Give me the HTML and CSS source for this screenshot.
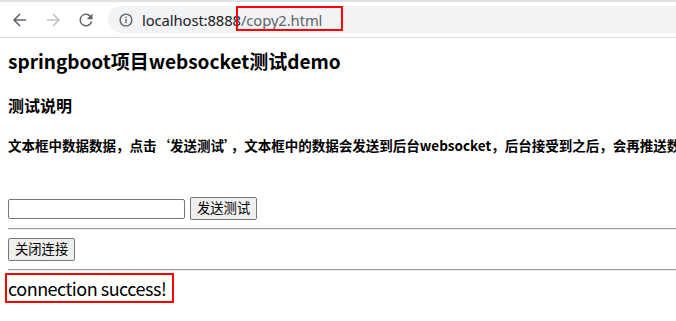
FILE: index.html
```html
<!DOCTYPE html>
<html lang="zh">
<head>
  <meta charset="UTF-8">
  <title>websocket测试demo</title>
  <link rel="stylesheet" href="styles.css">
</head>
<body>
  <div class="toolbar">
    <svg class="nav-icon" width="16" height="16" viewBox="0 0 16 16"><path d="M14 7.2H3.9l4.6-4.6L7.4 1.5 1 8l6.4 6.5 1.1-1.1-4.6-4.6H14z" fill="#5f6368"/></svg>
    <svg class="nav-icon" width="16" height="16" viewBox="0 0 16 16"><path d="M2 7.2h10.1L7.5 2.6l1.1-1.1L15 8l-6.4 6.5-1.1-1.1 4.6-4.6H2z" fill="#bdc1c6"/></svg>
    <svg class="nav-icon" width="16" height="16" viewBox="0 0 16 16"><path d="M12.6 3.4A6.3 6.3 0 0 0 8 1.5a6.5 6.5 0 1 0 6.3 8h-1.7A4.9 4.9 0 1 1 8 3.1c1.3 0 2.5.6 3.4 1.5L8.8 7.2h5.7V1.5z" fill="#5f6368"/></svg>
    <div class="omnibox">
      <svg width="14" height="14" viewBox="0 0 14 14"><circle cx="7" cy="7" r="5.9" fill="none" stroke="#5f6368" stroke-width="1.4"/><rect x="6.3" y="6" width="1.4" height="4.2" fill="#5f6368"/><rect x="6.3" y="3.6" width="1.4" height="1.4" fill="#5f6368"/></svg>
      <span class="url">localhost:8888<span class="path">/copy2.html</span></span>
      <div class="mark"></div>
    </div>
  </div>

  <div class="page">
    <h1>springboot项目websocket测试demo</h1>
    <h3>测试说明</h3>
    <h5>文本框中数据数据，点击‘发送测试’，文本框中的数据会发送到后台websocket，后台接受到之后，会再推送数据到前端，展示在下方；点击关闭连接，可以关闭该websocket；可以跟踪代码，了解具体的流程；代码上有详细注解</h5>
    <div class="row send-row">
      <input type="text" id="text">
      <button>发送测试</button>
    </div>
    <hr>
    <div class="row">
      <button>关闭连接</button>
    </div>
    <hr class="last">
    <div id="message"><span class="result">connection success!</span></div>
  </div>
</body>
</html>
```

FILE: styles.css
```css
html, body {
  margin: 0;
  padding: 0;
  overflow: hidden;
  background-color: #fff;
}
body {
  font-family: "Noto Sans CJK SC", sans-serif;
  color: #000;
}
.toolbar {
  height: 35px;
  border-top: 2px solid #dee1e6;
  border-bottom: 1px solid #dadce0;
  display: flex;
  align-items: center;
  padding-left: 12px;
}
.nav-icon {
  margin-right: 17px;
  flex: none;
}
.nav-icon:nth-child(3) {
  margin-right: 14px;
}
.omnibox {
  position: relative;
  flex: 1;
  height: 27px;
  background-color: #f1f3f4;
  border-radius: 14px 0 0 14px;
  display: flex;
  align-items: center;
  padding-left: 11px;
  margin-right: -20px;
}
.omnibox svg {
  flex: none;
  margin-right: 9px;
}
.url {
  font-family: "Noto Sans", sans-serif;
  font-size: 14.8px;
  color: #202124;
  letter-spacing: -0.1px;
}
.path {
  color: #5f6368;
}
.mark {
  position: absolute;
  left: 128px;
  top: 0;
  width: 103px;
  height: 21px;
  border: 2px solid #f00;
}
.page {
  width: 1200px;
  padding: 0 8px;
}
h1 {
  font-size: 19px;
  line-height: 22px;
  margin: 12px 0 0;
  font-weight: bold;
}
h3 {
  font-size: 16px;
  line-height: 20px;
  margin: 23px 0 0;
}
h5 {
  font-size: 13.5px;
  line-height: 18px;
  margin: 21px 0 0;
  white-space: nowrap;
}
.row {
  display: flex;
  align-items: center;
  gap: 5px;
}
.send-row {
  margin-top: 43px;
}
input {
  width: 173px;
  height: 16px;
  padding: 1px;
  border: 1px solid #767676;
  border-radius: 2px;
  margin: 0;
}
button {
  font-family: "Noto Sans CJK SC", sans-serif;
  font-size: 13.3px;
  line-height: 17px;
  padding: 1px 6px 3px;
  border: 1px solid #767676;
  border-radius: 2px;
  background-color: #efefef;
  color: #000;
  margin: 0;
}
hr {
  width: 1000px;
  margin: 8px 0;
  border: none;
  border-top: 1px solid #9a9a9a;
  border-bottom: 1px solid #eee;
  height: 0;
}
hr.last {
  margin-bottom: 2px;
}
.result {
  display: inline-block;
  margin-left: -3px;
  padding: 0 6px 0 1px;
  font-size: 18px;
  letter-spacing: -0.5px;
  line-height: 26px;
  border: 2px solid #f00;
}
```
